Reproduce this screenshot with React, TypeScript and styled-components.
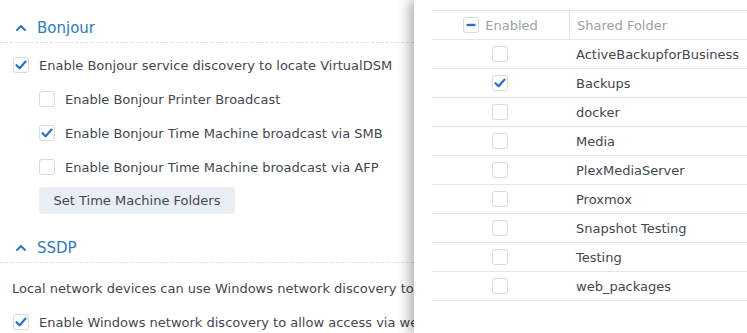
import React from "react";
import styled, { createGlobalStyle } from "styled-components";

const GlobalStyle = createGlobalStyle`
  html, body {
    margin: 0;
    padding: 0;
    background: #ffffff;
  }
  body {
    font-family: "DejaVu Sans", "Noto Sans", sans-serif;
    color: #3f4851;
  }
`;

const Check = ({ checked, partial }: { checked?: boolean; partial?: boolean }) => (
  <Box>
    {checked && (
      <svg width="14" height="14" viewBox="0 0 14 14">
        <path d="M2.5 7.2 L5.6 10.2 L11.6 3.6" fill="none" stroke="#1e74cc" strokeWidth="2.2" strokeLinecap="round" strokeLinejoin="round" />
      </svg>
    )}
    {partial && (
      <svg width="14" height="14" viewBox="0 0 14 14">
        <path d="M2.5 7 L11.5 7" stroke="#1e74cc" strokeWidth="2.4" />
      </svg>
    )}
  </Box>
);

const Chevron = () => (
  <svg width="12" height="12" viewBox="0 0 12 12">
    <path d="M2 8 L6 4 L10 8" fill="none" stroke="#2b7cc4" strokeWidth="2" strokeLinecap="round" strokeLinejoin="round" />
  </svg>
);

const folders = [
  { name: "ActiveBackupforBusiness", on: false },
  { name: "Backups", on: true },
  { name: "docker", on: false },
  { name: "Media", on: false },
  { name: "PlexMediaServer", on: false },
  { name: "Proxmox", on: false },
  { name: "Snapshot Testing", on: false },
  { name: "Testing", on: false },
  { name: "web_packages", on: false },
];

const App = () => {
  return (
    <Page>
      <GlobalStyle />

      <Settings>
        <SectionHead>
          <Chevron />
          <SectionTitle>Bonjour</SectionTitle>
        </SectionHead>

        <Options>
          <Option>
            <Check checked />
            <span>Enable Bonjour service discovery to locate VirtualDSM</span>
          </Option>
          <Option indent>
            <Check />
            <span>Enable Bonjour Printer Broadcast</span>
          </Option>
          <Option indent>
            <Check checked />
            <span>Enable Bonjour Time Machine broadcast via SMB</span>
          </Option>
          <Option indent>
            <Check />
            <span>Enable Bonjour Time Machine broadcast via AFP</span>
          </Option>
        </Options>

        <Button>Set Time Machine Folders</Button>

        <SectionHead spaced>
          <Chevron />
          <SectionTitle>SSDP</SectionTitle>
        </SectionHead>

        <Note>Local network devices can use Windows network discovery to find VirtualDSM</Note>
        <Option>
          <Check checked />
          <span>Enable Windows network discovery to allow access via web browser</span>
        </Option>
      </Settings>

      <Dialog>
        <Table>
          <HeadRow>
            <HeadCell center>
              <Check partial />
              <span>Enabled</span>
            </HeadCell>
            <HeadCell divider>Shared Folder</HeadCell>
          </HeadRow>
          {folders.map((f) => (
            <Row key={f.name}>
              <Cell center>
                <Check checked={f.on} />
              </Cell>
              <Cell>{f.name}</Cell>
            </Row>
          ))}
        </Table>
      </Dialog>
    </Page>
  );
};

export default App;

const Page = styled.div`
  width: 747px;
  height: 333px;
  display: flex;
  overflow: hidden;
  font-size: 13px;
`;

const Settings = styled.div`
  width: 414px;
  flex-shrink: 0;
  padding: 13px 0 0 12px;
  box-sizing: border-box;
  overflow: hidden;
  white-space: nowrap;
`;

const SectionHead = styled.div<{ spaced?: boolean }>`
  height: 29px;
  display: flex;
  align-items: center;
  gap: 10px;
  margin-left: -12px;
  padding-left: 15px;
  margin-top: ${(p) => (p.spaced ? "19px" : "0")};
  border-bottom: 1px dashed #dcdfe3;
`;

const SectionTitle = styled.div`
  font-size: 15px;
  color: #2b7cc4;
`;

const Options = styled.div`
  margin-top: 5px;
`;

const Option = styled.div<{ indent?: boolean }>`
  height: 34px;
  display: flex;
  align-items: center;
  gap: 10px;
  padding-left: ${(p) => (p.indent ? "27px" : "1px")};
`;

const Box = styled.div`
  width: 16px;
  height: 16px;
  flex-shrink: 0;
  border: 1px solid #d6dbe0;
  border-radius: 3px;
  background: #fff;
  box-sizing: border-box;
  display: flex;
  align-items: center;
  justify-content: center;
`;

const Button = styled.div`
  margin: 3px 0 0 27px;
  width: 196px;
  height: 27px;
  border-radius: 3px;
  background: #e9eef4;
  display: flex;
  align-items: center;
  justify-content: center;
  color: #3f4851;
`;

const Note = styled.div`
  height: 34px;
  margin-top: 8px;
  display: flex;
  align-items: center;
`;

const Dialog = styled.div`
  flex: 1;
  background: #fff;
  padding: 10px 0 0 18px;
  box-shadow: -5px 0 12px rgba(0, 0, 0, 0.3);
  position: relative;
  z-index: 1;
`;

const Table = styled.div`
  border-top: 1px solid #e3e6e9;
`;

const HeadRow = styled.div`
  height: 28px;
  display: grid;
  grid-template-columns: 137px 1fr;
  border-bottom: 1px solid #e3e6e9;
  color: #99a1a9;
`;

const HeadCell = styled.div<{ center?: boolean; divider?: boolean }>`
  display: flex;
  align-items: center;
  gap: 6px;
  justify-content: ${(p) => (p.center ? "center" : "flex-start")};
  padding-left: ${(p) => (p.divider ? "7px" : "0")};
  border-left: ${(p) => (p.divider ? "1px solid #e3e6e9" : "none")};
`;

const Row = styled.div`
  height: 28px;
  display: grid;
  grid-template-columns: 135px 1fr;
  border-bottom: 1px solid #e3e6e9;
`;

const Cell = styled.div<{ center?: boolean }>`
  display: flex;
  align-items: center;
  justify-content: ${(p) => (p.center ? "center" : "flex-start")};
  padding-left: ${(p) => (p.center ? "0" : "9px")};
  white-space: nowrap;
`;
